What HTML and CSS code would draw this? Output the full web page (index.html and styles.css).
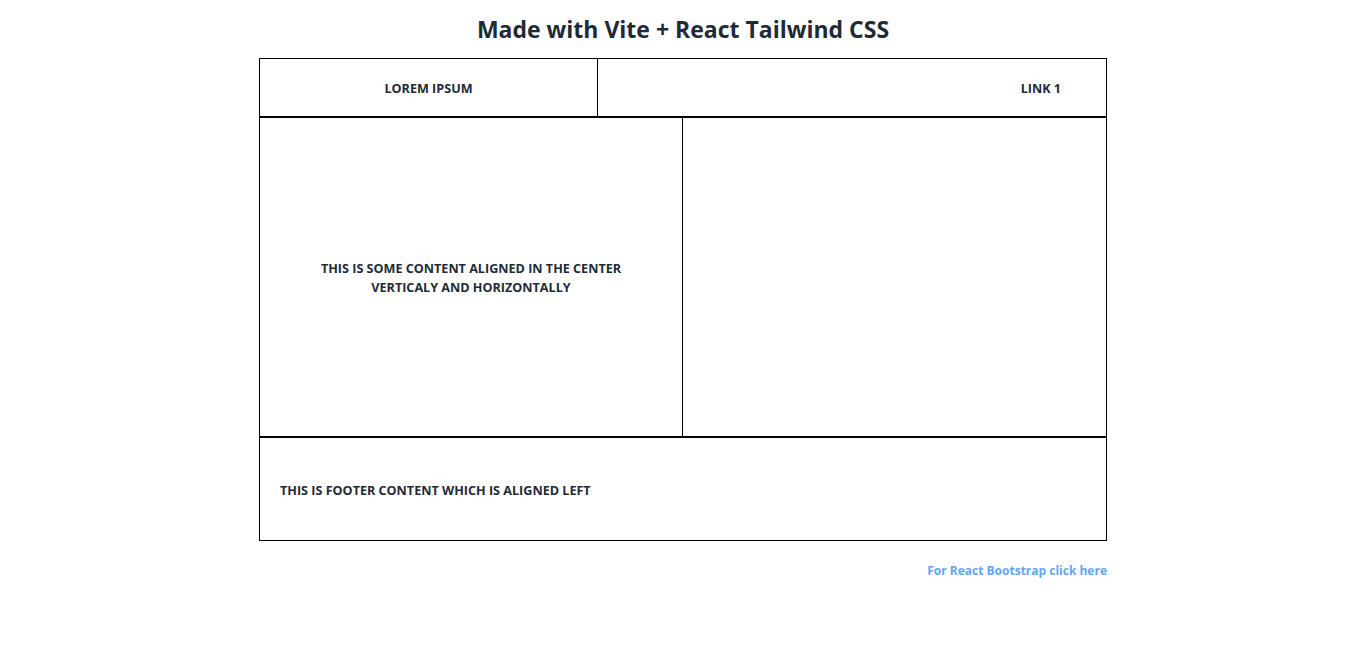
FILE: index.html
```html
<!DOCTYPE html>
<html lang="en">
<head>
    <meta charset="UTF-8">
    <meta name="viewport" content="width=device-width, initial-scale=1.0">
    <title>Vite + React + Tailwind</title>
    <link rel="stylesheet" href="styles.css">
</head>
<body>

<h1 class="title">Made with Vite + React Tailwind CSS</h1>

<div class="layout">
    <header class="top">
        <div class="brand">LOREM IPSUM</div>
        <nav class="links">
            <a href="#">LINK 1</a>
        </nav>
    </header>

    <main class="content">
        <div class="center-box">
            <p>THIS IS SOME CONTENT ALIGNED IN THE CENTER VERTICALY AND HORIZONTALLY</p>
        </div>
        <div class="side-box"></div>
    </main>

    <footer class="bottom">
        <p>THIS IS FOOTER CONTENT WHICH IS ALIGNED LEFT</p>
    </footer>
</div>

<div class="switch">
    <a href="#">For React Bootstrap click here</a>
</div>

</body>
</html>
```

FILE: styles.css
```css
body {
    font-family: "Open Sans", "Noto Sans", Arial, sans-serif;
    color: #1f2a37;
    background-color: #fff;
    margin: 0;
    padding: 0;
}
.title {
    font-size: 23px;
    font-weight: 700;
    line-height: 32px;
    text-align: center;
    margin: 13px 0 13px;
}
.layout {
    width: 848px;
    margin: 0 auto;
    font-size: 12.6px;
    font-weight: 700;
}
.top {
    display: flex;
    height: 59px;
    box-sizing: border-box;
    border: 1px solid #000;
    padding-top: 2px;
}
.brand {
    width: 337px;
    margin-top: -2px;
    border-right: 1px solid #000;
    display: flex;
    align-items: center;
    justify-content: center;
    padding-top: 2px;
}
.links {
    flex: 1;
    display: flex;
    align-items: center;
    justify-content: flex-end;
    padding-right: 45px;
}
.links a {
    color: #1f2a37;
    text-decoration: none;
}
.content {
    display: flex;
    height: 320px;
    box-sizing: border-box;
    border: 1px solid #000;
}
.center-box {
    width: 423px;
    border-right: 1px solid #000;
    display: flex;
    align-items: center;
    justify-content: center;
    text-align: center;
    padding: 2px 48px 0;
    box-sizing: border-box;
}
.center-box p {
    margin: 0;
    line-height: 19px;
}
.side-box {
    flex: 1;
}
.bottom {
    height: 104px;
    box-sizing: border-box;
    border: 1px solid #000;
    display: flex;
    align-items: center;
    padding: 2px 0 0 20px;
}
.bottom p {
    margin: 0;
}
.switch {
    width: 848px;
    margin: 21px auto 0;
    text-align: right;
    font-size: 12px;
    font-weight: 700;
}
.switch a {
    color: #60a5fa;
    text-decoration: none;
}
```
